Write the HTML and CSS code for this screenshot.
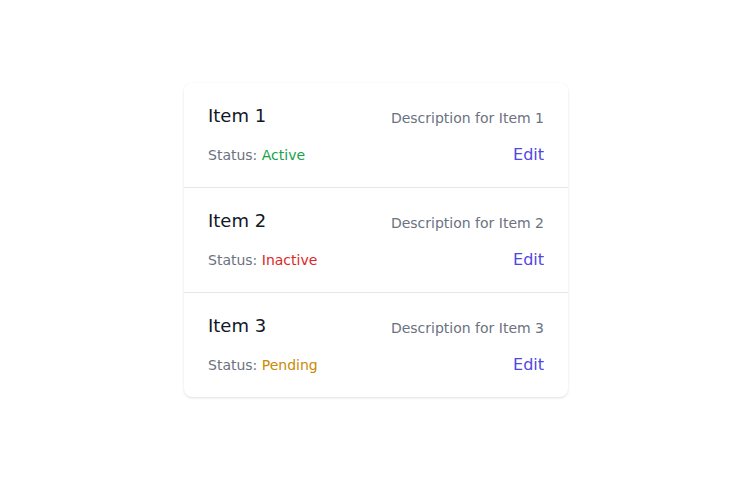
FILE: index.html
```html
<!DOCTYPE html>
<html lang="en">
<head>
<meta charset="utf-8">
<title>Items</title>
<link rel="stylesheet" href="styles.css">
</head>
<body>
<main class="page">
  <ul class="card">
    <li class="row">
      <div class="row-top">
        <h3 class="title">Item 1</h3>
        <p class="desc">Description for Item 1</p>
      </div>
      <div class="row-bottom">
        <p class="status">Status: <span class="st-active">Active</span></p>
        <a class="edit" href="#">Edit</a>
      </div>
    </li>
    <li class="row">
      <div class="row-top">
        <h3 class="title">Item 2</h3>
        <p class="desc">Description for Item 2</p>
      </div>
      <div class="row-bottom">
        <p class="status">Status: <span class="st-inactive">Inactive</span></p>
        <a class="edit" href="#">Edit</a>
      </div>
    </li>
    <li class="row">
      <div class="row-top">
        <h3 class="title">Item 3</h3>
        <p class="desc">Description for Item 3</p>
      </div>
      <div class="row-bottom">
        <p class="status">Status: <span class="st-pending">Pending</span></p>
        <a class="edit" href="#">Edit</a>
      </div>
    </li>
  </ul>
</main>
</body>
</html>
```
FILE: styles.css
```css
* { box-sizing: border-box; }
html, body { margin: 0; padding: 0; background: #ffffff; }
body {
  font-family: "DejaVu Sans", sans-serif;
  color: #111827;
}
.page {
  min-height: 484px;
  display: flex;
  align-items: center;
  justify-content: center;
  padding: 0 3px 4px 0;
}
.card {
  list-style: none;
  margin: 0;
  padding: 0;
  width: 384px;
  background: #fff;
  border-radius: 8px;
  box-shadow: 0 1px 3px rgba(0,0,0,0.1), 0 1px 2px -1px rgba(0,0,0,0.1);
}
.row {
  padding: 21px 24px 20px;
  border-bottom: 1px solid #e5e7eb;
}
.row:last-child { border-bottom: none; }
.row-top, .row-bottom {
  display: flex;
  justify-content: space-between;
}
.row-top { align-items: flex-end; }
.row-bottom { align-items: baseline; margin-top: 15px; }
.title {
  margin: 0;
  font-size: 18px;
  line-height: 24px;
  font-weight: 400;
  color: #111827;
}
.desc, .status {
  margin: 0;
  font-size: 14px;
  line-height: 20px;
  color: #6b7280;
}
.st-active { color: #16a34a; }
.st-inactive { color: #dc2626; }
.st-pending { color: #ca8a04; }
.edit {
  font-size: 16px;
  line-height: 24px;
  color: #4f46e5;
  text-decoration: none;
}
```
